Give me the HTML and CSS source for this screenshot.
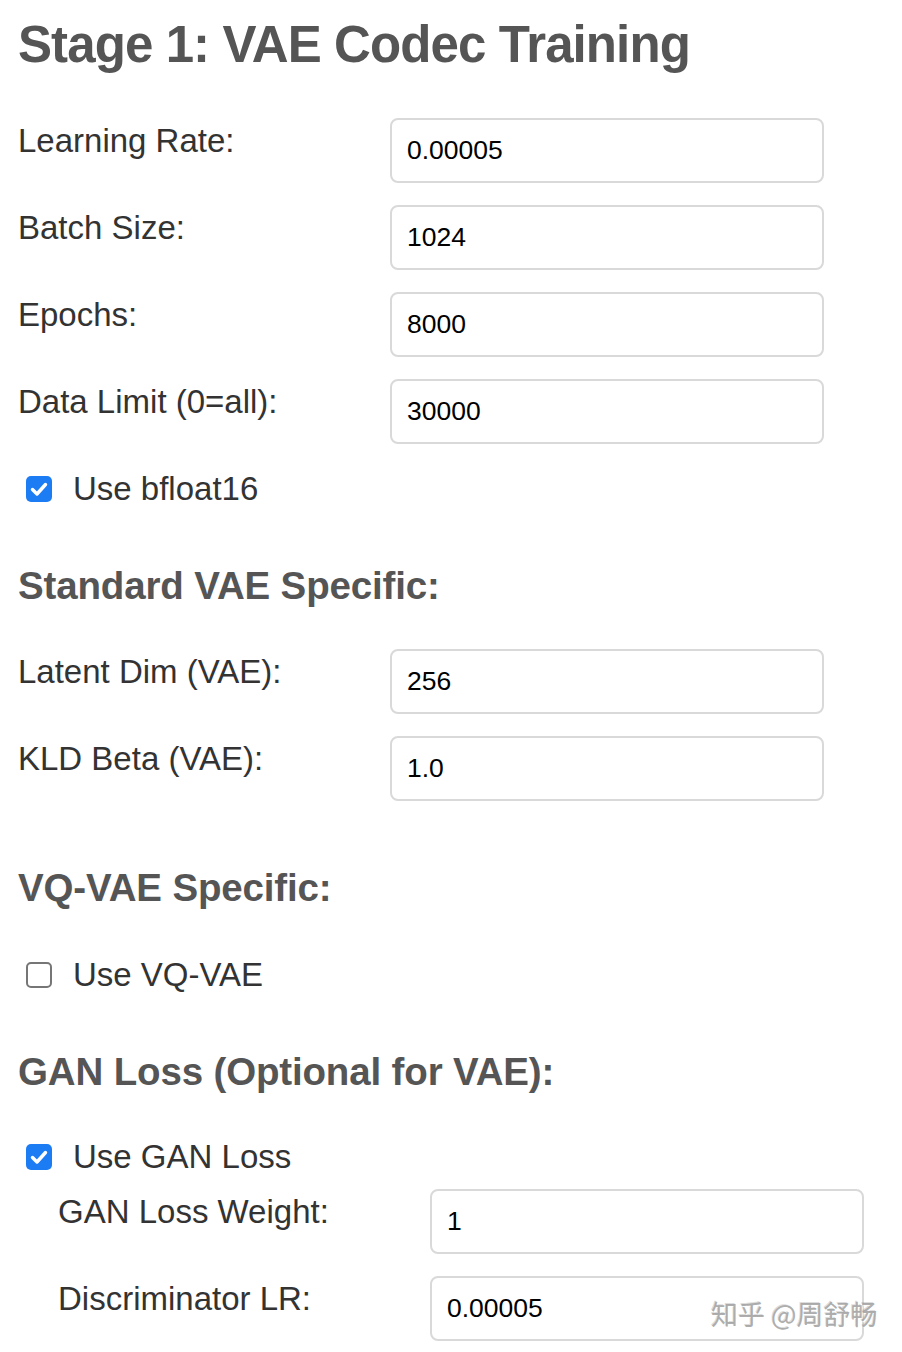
FILE: index.html
```html
<!DOCTYPE html>
<html lang="en">
<head>
<meta charset="utf-8">
<title>Stage 1: VAE Codec Training</title>
<link rel="stylesheet" href="styles.css">
</head>
<body>
<div class="page">
  <h1 class="title">Stage 1: VAE Codec Training</h1>

  <div class="fields first">
    <div class="row"><label class="lbl">Learning Rate:</label><div class="inp">0.00005</div></div>
    <div class="row"><label class="lbl">Batch Size:</label><div class="inp">1024</div></div>
    <div class="row"><label class="lbl">Epochs:</label><div class="inp">8000</div></div>
    <div class="row"><label class="lbl">Data Limit (0=all):</label><div class="inp">30000</div></div>
  </div>

  <div class="check check-bf16">
    <span class="box on"><svg viewBox="0 0 26 26" width="26" height="26"><path d="M6.5 13.5 L11 18 L19.5 8.5" fill="none" stroke="#fff" stroke-width="3.4" stroke-linecap="round" stroke-linejoin="round"/></svg></span>
    <span class="ctext">Use bfloat16</span>
  </div>

  <h2 class="sub sub-std">Standard VAE Specific:</h2>
  <div class="fields std">
    <div class="row"><label class="lbl">Latent Dim (VAE):</label><div class="inp">256</div></div>
    <div class="row"><label class="lbl">KLD Beta (VAE):</label><div class="inp">1.0</div></div>
  </div>

  <h2 class="sub sub-vq">VQ-VAE Specific:</h2>
  <div class="check check-vq">
    <span class="box off"></span>
    <span class="ctext">Use VQ-VAE</span>
  </div>

  <h2 class="sub sub-gan">GAN Loss (Optional for VAE):</h2>
  <div class="check check-gan">
    <span class="box on"><svg viewBox="0 0 26 26" width="26" height="26"><path d="M6.5 13.5 L11 18 L19.5 8.5" fill="none" stroke="#fff" stroke-width="3.4" stroke-linecap="round" stroke-linejoin="round"/></svg></span>
    <span class="ctext">Use GAN Loss</span>
  </div>
  <div class="fields nested">
    <div class="row"><label class="lbl">GAN Loss Weight:</label><div class="inp">1</div></div>
    <div class="row"><label class="lbl">Discriminator LR:</label><div class="inp">0.00005</div></div>
  </div>

  <div class="watermark">知乎 @周舒畅</div>
</div>
</body>
</html>
```

FILE: styles.css
```css
html, body {
  margin: 0;
  padding: 0;
  background: #ffffff;
}

body {
  font-family: "Liberation Sans", Arial, sans-serif;
  width: 902px;
  height: 1352px;
  overflow: hidden;
}

.page {
  position: relative;
  padding: 15px 0 0 18px;
  height: 1352px;
  box-sizing: border-box;
}

.title {
  margin: 0;
  font-size: 51px;
  line-height: 60px;
  letter-spacing: -0.9px;
  font-weight: bold;
  color: #555555;
}

.fields {
  display: flex;
  flex-direction: column;
  gap: 22px;
}

.fields.first { margin-top: 43px; }
.fields.std { margin-top: 41px; }
.fields.nested { margin-top: 12px; padding-left: 40px; }

.row {
  display: flex;
  align-items: flex-start;
}

.lbl {
  width: 372px;
  flex: 0 0 372px;
  font-size: 33px;
  line-height: 40px;
  padding-top: 3px;
  color: #333333;
}

.inp {
  width: 434px;
  height: 65px;
  box-sizing: border-box;
  border: 2px solid #d9d9d9;
  border-radius: 8px;
  padding: 0 15px;
  display: flex;
  align-items: center;
  font-size: 26.5px;
  color: #000000;
}

.check {
  display: flex;
  align-items: center;
  height: 40px;
}

.check-bf16 { margin-top: 25px; }
.check-vq { margin-top: 45px; }
.check-gan { margin-top: 43px; }

.box {
  width: 26px;
  height: 26px;
  box-sizing: border-box;
  border-radius: 5px;
  margin-left: 8px;
  margin-right: 21px;
  flex: 0 0 26px;
  display: block;
}

.box svg { display: block; }

.box.on {
  background: #1c7cf4;
}

.box.off {
  border: 2px solid #767676;
  background: #ffffff;
}

.ctext {
  font-size: 33px;
  line-height: 40px;
  color: #333333;
}

.sub {
  margin: 0;
  font-size: 38.5px;
  line-height: 45px;
  letter-spacing: -0.15px;
  font-weight: bold;
  color: #555555;
}

.sub-std { margin-top: 54px; }
.sub-vq { margin-top: 64px; }
.sub-gan { margin-top: 54px; }

.watermark {
  position: absolute;
  left: 711px;
  top: 1294px;
  font-family: "Noto Sans CJK SC", sans-serif;
  font-size: 27px;
  line-height: 40px;
  color: rgba(160, 160, 160, 0.85);
  text-shadow: 1px 1px 0 rgba(255, 255, 255, 0.8), -1px -1px 0 rgba(120, 120, 120, 0.25);
  white-space: nowrap;
}
```
